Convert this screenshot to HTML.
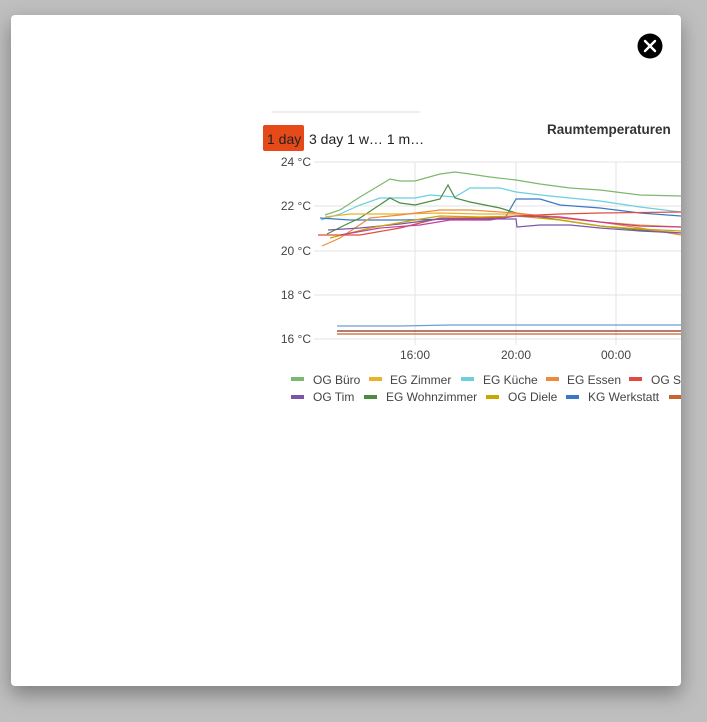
<!DOCTYPE html>
<html><head><style>
body{margin:0;width:707px;height:722px;background:#bfbfbf;font-family:"Liberation Sans",sans-serif;overflow:hidden;position:relative}
.modal{position:absolute;left:11px;top:15px;width:670px;height:671px;background:#fff;border-radius:4px;box-shadow:0 8px 20px rgba(0,0,0,.35);overflow:hidden}
</style></head><body>
<div class="modal">
<svg width="670" height="671" style="position:absolute;left:0;top:0" font-family="Liberation Sans, sans-serif">
<g transform="translate(-11,-15)">
<circle cx="650" cy="46" r="12.5" fill="#000"/>
<path d="M645 41L655 51M655 41L645 51" stroke="#fff" stroke-width="2.4" stroke-linecap="round"/>
<line x1="272" y1="112" x2="420" y2="112" stroke="#ddd"/>
<rect x="263" y="125" width="41" height="26" rx="2" fill="#e64a19"/>
<text x="267" y="144" font-size="14" fill="#222">1 day</text>
<text x="309" y="144" font-size="14" fill="#222">3 day 1 w…  1 m…</text>
<text x="547" y="134" font-size="13.5" font-weight="bold" fill="#333">Raumtemperaturen</text>
<g stroke="#e3e3e3" stroke-width="1">
<line x1="314" y1="162" x2="690" y2="162"/><line x1="314" y1="206" x2="690" y2="206"/><line x1="314" y1="251" x2="690" y2="251"/><line x1="314" y1="295" x2="690" y2="295"/><line x1="314" y1="339" x2="690" y2="339"/>
<line x1="415" y1="162" x2="415" y2="345"/><line x1="516" y1="162" x2="516" y2="345"/><line x1="616" y1="162" x2="616" y2="345"/>
</g>
<g font-size="12" fill="#444" text-anchor="end">
<text x="311" y="166">24 °C</text><text x="311" y="210">22 °C</text><text x="311" y="255">20 °C</text><text x="311" y="299">18 °C</text><text x="311" y="343">16 °C</text>
</g>
<g font-size="12" fill="#444" text-anchor="middle"><text x="415" y="359">16:00</text><text x="516" y="359">20:00</text><text x="616" y="359">00:00</text></g>
<g fill="none" stroke-width="1.2">
<polyline stroke="#7cb86e" points="325,215 340,210 360,197 390,179 400,181 415,181 440,174 455,172 470,174 490,177 516,180 540,184 570,188 600,190 616,192 640,195 681,196"/>
<polyline stroke="#6bcfe0" points="321,220 340,214 360,205 380,198 415,198 430,195 455,197 470,188 500,188 516,192 550,196 600,201 640,207 681,212"/>
<polyline stroke="#3a78c6" points="320,218 350,220 400,220 460,219 505,218 516,199 540,199 560,205 600,208 640,213 681,216"/>
<polyline stroke="#4a8d3e" points="327,234 345,225 360,218 390,198 400,203 415,205 440,199 448,185 455,198 470,202 500,208 516,213 560,220 600,226 640,230 681,233"/>
<polyline stroke="#e8b22c" points="325,217 350,214 400,214 440,213 480,214 516,214 560,217 600,222 640,225 681,227"/>
<polyline stroke="#ee8a3c" points="322,246 340,238 370,218 400,215 440,210 470,210 516,213 560,218 600,222 640,228 681,235"/>
<polyline stroke="#e24a3c" points="318,235 360,235 400,228 440,218 480,218 516,216 560,214 600,213 681,212"/>
<polyline stroke="#7b56a8" points="328,230 360,228 400,224 440,219 500,219 516,219 517,227 540,225 570,225 600,228 640,231 681,233"/>
<polyline stroke="#c9a600" points="330,238 370,228 415,220 440,216 480,217 516,216 560,220 600,226 640,229 681,231"/>
<polyline stroke="#c13e9c" points="340,235 380,228 420,225 450,220 490,220 516,216 560,217 600,222 640,226 681,227"/>
<polyline stroke="#6b9fd6" points="337,326 400,326 450,325 550,325 681,325"/>
<polyline stroke="#8b2a1a" points="337,331 681,331"/>
<polyline stroke="#c9652a" points="337,334 681,334"/>
</g>
<g font-size="12" fill="#444">
<rect x="291" y="377" width="13" height="4" fill="#7cb86e"/><text x="313" y="384">OG Büro</text>
<rect x="369" y="377" width="13" height="4" fill="#e8b22c"/><text x="390" y="384">EG Zimmer</text>
<rect x="461" y="377" width="13" height="4" fill="#6bcfe0"/><text x="483" y="384">EG Küche</text>
<rect x="546" y="377" width="13" height="4" fill="#ee8a3c"/><text x="567" y="384">EG Essen</text>
<rect x="629" y="377" width="13" height="4" fill="#e24a3c"/><text x="651" y="384">OG Schlaf</text>
<rect x="291" y="395" width="13" height="4" fill="#7b56a8"/><text x="313" y="401">OG Tim</text>
<rect x="364" y="395" width="13" height="4" fill="#4a8d3e"/><text x="386" y="401">EG Wohnzimmer</text>
<rect x="486" y="395" width="13" height="4" fill="#c9a600"/><text x="508" y="401">OG Diele</text>
<rect x="566" y="395" width="13" height="4" fill="#3a78c6"/><text x="588" y="401">KG Werkstatt</text>
<rect x="669" y="395" width="13" height="4" fill="#c9652a"/>
</g>
</g>
</svg>
</div>
</body></html>
